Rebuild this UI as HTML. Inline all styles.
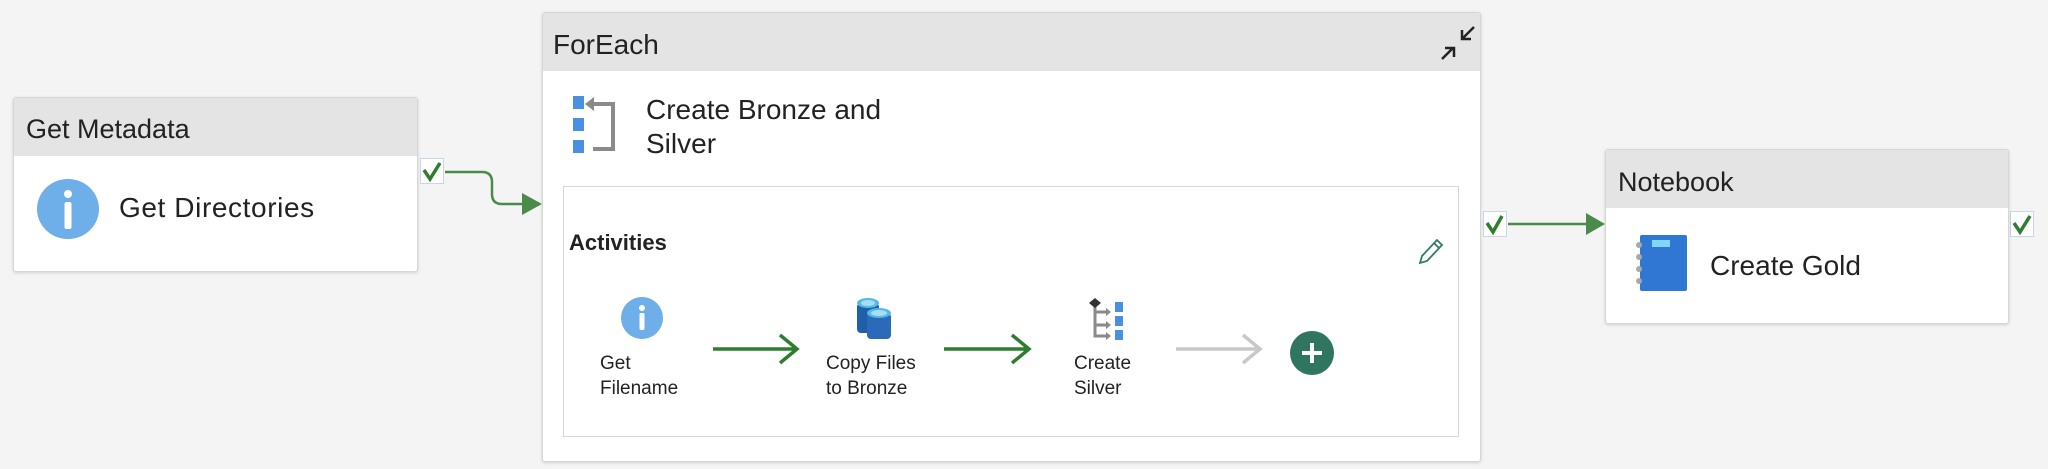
<!DOCTYPE html>
<html><head><meta charset="utf-8"><style>
body{margin:0;width:2048px;height:469px;background:#f4f4f4;font-family:"Liberation Sans",sans-serif;color:#222;position:relative;overflow:hidden}
.a{position:absolute}
.box{position:absolute;background:#fff;border:1px solid #d6d6d6;border-radius:3px;box-shadow:0 1px 3px rgba(0,0,0,.15)}
.hd{position:absolute;left:0;right:0;top:0;background:#e4e4e4}
.t{position:absolute;white-space:nowrap;line-height:1}
.chk{position:absolute;width:24px;height:26px;background:#fff;border:1px solid #c8d6e8;box-sizing:border-box}
</style></head><body>
<div class="box" style="left:13px;top:97px;width:403px;height:173px">
 <div class="hd" style="height:58px"></div>
 <div class="t" style="left:12px;top:18px;font-size:27px">Get Metadata</div>
 <svg class="a" style="left:22px;top:81px" width="64" height="60"><ellipse cx="32" cy="30" rx="31" ry="30" fill="#6eaee9"/><circle cx="32" cy="15" r="4" fill="#fff"/><rect x="28.5" y="23" width="7" height="27" rx="2" fill="#fff"/></svg>
 <div class="t" style="left:105px;top:96px;font-size:28px;letter-spacing:0.6px">Get Directories</div>
</div>
<div class="box" style="left:542px;top:12px;width:937px;height:448px">
 <div class="hd" style="height:58px"></div>
 <div class="t" style="left:10px;top:18px;font-size:28px">ForEach</div>
 <svg class="a" style="left:897px;top:12px" width="36" height="36" fill="none" stroke="#222" stroke-width="2.5"><path d="M34 2L23 13M22 5V14H31M2 34L13 23M5 23H14V32"/></svg>
 <svg class="a" style="left:30px;top:83px" width="44" height="58"><rect x="0" y="0" width="11" height="13" fill="#4a90e2"/><rect x="0" y="22" width="11" height="13" fill="#4a90e2"/><rect x="0" y="44" width="11" height="13" fill="#4a90e2"/><path d="M20 8H40V53H20" fill="none" stroke="#8a8a8a" stroke-width="4"/><path d="M12 8L21 1V15Z" fill="#8a8a8a"/></svg>
 <div class="t" style="left:103px;top:80px;font-size:28px;line-height:34px">Create Bronze and<br>Silver</div>
 <div class="a" style="left:20px;top:173px;width:896px;height:251px;border:1.5px solid #d6d6d6;box-sizing:border-box"></div>
 <div class="t" style="left:26px;top:219px;font-size:22px;font-weight:bold">Activities</div>
 <svg class="a" style="left:873px;top:224px" width="28" height="28" fill="none" stroke="#2e7d64" stroke-width="1.8"><path d="M4 26L6 19L21 3L26 8L11 24Z M18 6L23 11"/></svg>
 <svg class="a" style="left:77px;top:284px" width="44" height="42"><ellipse cx="22" cy="21" rx="21" ry="21" fill="#6eaee9"/><circle cx="22" cy="11" r="3" fill="#fff"/><rect x="19.5" y="16" width="5" height="17" rx="1.5" fill="#fff"/></svg>
 <div class="t" style="left:57px;top:338px;font-size:19px;line-height:25px">Get<br>Filename</div>
 <svg class="a" style="left:314px;top:284px" width="36" height="44"><rect x="0" y="6" width="22" height="30" rx="4" fill="#1f5fa8"/><ellipse cx="11" cy="6" rx="11" ry="5" fill="#54b8e8"/><ellipse cx="11" cy="6" rx="7" ry="3" fill="#a8def5"/><rect x="10" y="16" width="24" height="26" rx="4" fill="#2a6ab8"/><ellipse cx="22" cy="16" rx="12" ry="5" fill="#54b8e8"/><ellipse cx="22" cy="16" rx="8" ry="3" fill="#a8def5"/></svg>
 <div class="t" style="left:283px;top:338px;font-size:19px;line-height:25px">Copy Files<br>to Bronze</div>
 <svg class="a" style="left:544px;top:285px" width="40" height="42"><path d="M8 2V38H20M8 14H20M8 27H20" fill="none" stroke="#8a8a8a" stroke-width="3"/><path d="M2 5L8 0L14 5L8 10Z" fill="#333"/><rect x="28" y="4" width="8" height="10" fill="#4a90e2"/><rect x="28" y="18" width="8" height="10" fill="#4a90e2"/><rect x="28" y="32" width="8" height="10" fill="#4a90e2"/><path d="M19 10l5 4-5 4M19 23l5 4-5 4M19 34l5 4-5 4" fill="#8a8a8a"/></svg>
 <div class="t" style="left:531px;top:338px;font-size:19px;line-height:25px">Create<br>Silver</div>
 <svg class="a" style="left:746px;top:317px" width="46" height="46"><circle cx="23" cy="23" r="22" fill="#2f7560"/><path d="M23 13V33M13 23H33" stroke="#fff" stroke-width="4"/></svg>
</div>
<svg class="a" style="left:0;top:0" width="2048" height="469" fill="none">
 <path d="M445 172H482Q492 172 492 182V194Q492 204 502 204H527" stroke="#4a8a4a" stroke-width="2.5"/>
 <path d="M522 193L542 204L522 215Z" fill="#4a8a4a"/>
 <path d="M713 349H795M780 335L797 349L780 363" stroke="#2f7d2f" stroke-width="3.5"/>
 <path d="M944 349H1027M1012 335L1029 349L1012 363" stroke="#2f7d2f" stroke-width="3.5"/>
 <path d="M1176 349H1258M1243 335L1260 349L1243 363" stroke="#c8c8c8" stroke-width="3.5"/>
 <path d="M1508 224H1592" stroke="#4a8a4a" stroke-width="2.5"/>
 <path d="M1586 213L1605 224L1586 235Z" fill="#4a8a4a"/>
</svg>
<div class="chk" style="left:420px;top:158px"></div>
<div class="chk" style="left:1483px;top:211px"></div>
<div class="chk" style="left:2010px;top:211px"></div>
<svg class="a" style="left:0;top:0" width="2048" height="469" fill="none" stroke="#2f7d2f" stroke-width="3.5"><path d="M424 170L430 179L440 163M1487 223L1493 232L1502 216M2014 223L2020 232L2030 216"/></svg>
<div class="box" style="left:1605px;top:149px;width:402px;height:173px">
 <div class="hd" style="height:58px"></div>
 <div class="t" style="left:12px;top:19px;font-size:27px">Notebook</div>
 <svg class="a" style="left:28px;top:85px" width="54" height="58"><rect x="6" y="0" width="47" height="56" rx="2" fill="#3076d3"/><rect x="18" y="5" width="18" height="7" fill="#7fd6f8"/><g fill="#aaa"><circle cx="5" cy="10" r="3"/><circle cx="5" cy="22" r="3"/><circle cx="5" cy="34" r="3"/><circle cx="5" cy="46" r="3"/></g></svg>
 <div class="t" style="left:104px;top:102px;font-size:28px">Create Gold</div>
</div>
</body></html>
